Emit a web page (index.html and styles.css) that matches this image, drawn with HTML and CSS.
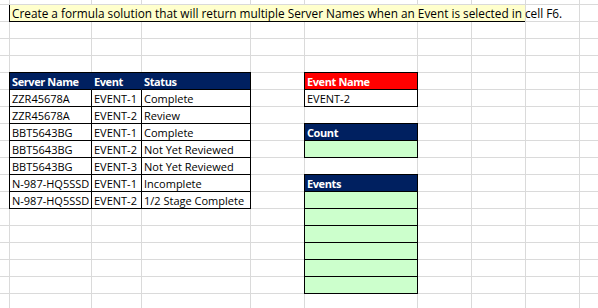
FILE: index.html
```html
<!DOCTYPE html>
<html lang="en">
<head>
<meta charset="utf-8">
<title>Server events</title>
<link rel="stylesheet" href="styles.css">
</head>
<body>
<div class="sheet">
  <div class="note">Create a formula solution that will return multiple Server Names when an Event is selected in cell F6.</div>

  <div class="data">
    <div class="hd">Server Name</div><div class="hd">Event</div><div class="hd end">Status</div>
    <div class="c">ZZR45678A</div><div class="c">EVENT-1</div><div class="c">Complete</div>
    <div class="c">ZZR45678A</div><div class="c">EVENT-2</div><div class="c">Review</div>
    <div class="c">BBT5643BG</div><div class="c">EVENT-1</div><div class="c">Complete</div>
    <div class="c">BBT5643BG</div><div class="c">EVENT-2</div><div class="c">Not Yet Reviewed</div>
    <div class="c">BBT5643BG</div><div class="c">EVENT-3</div><div class="c">Not Yet Reviewed</div>
    <div class="c">N-987-HQ5SSD</div><div class="c">EVENT-1</div><div class="c">Incomplete</div>
    <div class="c">N-987-HQ5SSD</div><div class="c">EVENT-2</div><div class="c">1/2 Stage Complete</div>
  </div>

  <div class="box pick">
    <div class="hd red">Event Name</div>
    <div class="c">EVENT-2</div>
  </div>

  <div class="box count">
    <div class="hd">Count</div>
    <div class="c green"></div>
  </div>

  <div class="box events">
    <div class="hd">Events</div>
    <div class="c green"></div>
    <div class="c green"></div>
    <div class="c green"></div>
    <div class="c green"></div>
    <div class="c green"></div>
    <div class="c green"></div>
  </div>
</div>
</body>
</html>
```

FILE: styles.css
```css
html, body {
  margin: 0;
  padding: 0;
  background: #ffffff;
}

.sheet {
  display: grid;
  width: 598px;
  height: 308px;
  overflow: hidden;
  grid-template-columns: 9px 82px 50px 109px 54px 113px 54px 54px 54px 1fr;
  grid-template-rows: 4px repeat(18, 17px);
  align-items: start;
  justify-items: start;
  font-family: "Open Sans", "Liberation Sans", sans-serif;
  font-size: 11px;
  line-height: 17px;
  color: #000000;
  background-color: #ffffff;
  background-image:
    linear-gradient(#dadada, #dadada),
    linear-gradient(#dadada, #dadada),
    linear-gradient(#dadada, #dadada),
    linear-gradient(#dadada, #dadada),
    linear-gradient(#dadada, #dadada),
    linear-gradient(#dadada, #dadada),
    linear-gradient(#dadada, #dadada),
    linear-gradient(#dadada, #dadada),
    linear-gradient(#dadada, #dadada),
    linear-gradient(to bottom, #dadada 0 1px, transparent 1px);
  background-size:
    1px 100%, 1px 100%, 1px 100%, 1px 100%, 1px 100%,
    1px 100%, 1px 100%, 1px 100%, 1px 100%,
    100% 17px;
  background-position:
    9px 0, 91px 0, 141px 0, 250px 0, 304px 0,
    417px 0, 471px 0, 525px 0, 579px 0,
    0 4px;
  background-repeat:
    no-repeat, no-repeat, no-repeat, no-repeat, no-repeat,
    no-repeat, no-repeat, no-repeat, no-repeat,
    repeat-y;
}

.note {
  grid-column: 2 / 9;
  grid-row: 2;
  box-sizing: border-box;
  width: 516px;
  height: 17px;
  margin-top: 1px;
  padding-left: 2px;
  background: #ffffcc;
  border-left: 1px solid #000000;
  border-bottom: 1px solid #000000;
  font-size: 11.8px;
  line-height: 16px;
  white-space: nowrap;
  overflow: visible;
}

.data {
  grid-column: 2 / 5;
  grid-row: 6 / 14;
  display: grid;
  grid-template-columns: 82px 50px 109px;
  grid-auto-rows: 17px;
  border-left: 1px solid #000000;
  border-top: 1px solid #000000;
  background: #ffffff;
}

.box {
  grid-column: 6;
  display: grid;
  grid-template-columns: 113px;
  grid-auto-rows: 17px;
  border-left: 1px solid #000000;
  border-top: 1px solid #000000;
  background: #ffffff;
}

.pick { grid-row: 6 / 8; }
.count { grid-row: 9 / 11; }
.events { grid-row: 12 / 19; }

.c, .hd {
  box-sizing: border-box;
  padding-left: 2px;
  border-right: 1px solid #000000;
  border-bottom: 1px solid #000000;
  white-space: nowrap;
  overflow: hidden;
}

.hd {
  background: #002060;
  color: #ffffff;
  font-weight: 700;
  letter-spacing: -0.4px;
}

.data .hd {
  border-right-color: #002060;
}

.data .hd.end {
  border-right-color: #000000;
}

.hd.red {
  background: #ff0000;
}

.green {
  background: #ccffcc;
}
```
